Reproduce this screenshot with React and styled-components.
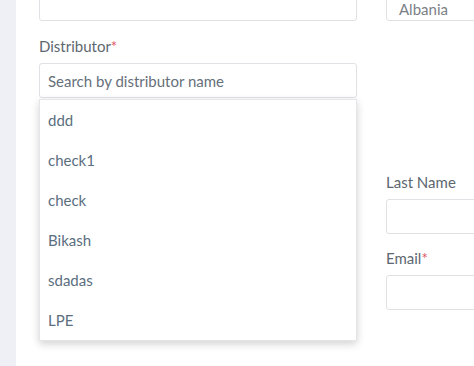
import styled, { createGlobalStyle } from "styled-components";

const Global = createGlobalStyle`
  html, body {
    margin: 0;
    padding: 0;
    background: #fff;
    overflow: hidden;
  }
  body {
    font-family: Lato, "Open Sans", sans-serif;
  }
`;

const Page = styled.div`
  display: flex;
  width: 474px;
  height: 366px;
  overflow: hidden;
`;

const Strip = styled.div`
  width: 16px;
  flex: none;
  background: #eff0f5;
`;

const Form = styled.div`
  display: grid;
  grid-template-columns: 318px 160px;
  column-gap: 29px;
  padding-left: 23px;
  margin-top: -14px;
  align-items: start;
`;

const Column = styled.div`
  display: flex;
  flex-direction: column;
`;

const Field = styled.div`
  display: flex;
  flex-direction: column;
  position: relative;
  margin-top: ${(p) => p.$top || 0}px;
`;

const Label = styled.label`
  font-size: 15px;
  line-height: 20px;
  color: #5d6770;
  margin-bottom: 7px;

  span {
    color: #e0555f;
  }
`;

const Input = styled.div`
  box-sizing: border-box;
  height: 35px;
  border: 1px solid #dfe1e5;
  border-radius: 3px;
  background: #fff;
  display: flex;
  align-items: center;
  font-size: 15px;
  color: ${(p) => (p.$muted ? "#7b8087" : "#66707a")};
  padding: ${(p) => (p.$muted ? "10px 0 0 12px" : "0 0 0 8px")};
`;

const Menu = styled.ul`
  position: absolute;
  top: 63px;
  left: 0;
  right: 0;
  margin: 0;
  padding: 0;
  list-style: none;
  background: #fff;
  border: 1px solid #e4e6ea;
  box-shadow: 0 3px 8px rgba(0, 0, 0, 0.18);
`;

const Item = styled.li`
  height: 40px;
  display: flex;
  align-items: center;
  padding-left: 8px;
  font-size: 15px;
  color: #5b6e80;
`;

const items = ["ddd", "check1", "check", "Bikash", "sdadas", "LPE"];

export default function App() {
  return (
    <>
      <Global />
      <Page>
        <Strip />
        <Form>
          <Column>
            <Input />
            <Field $top={15}>
              <Label>
                Distributor<span>*</span>
              </Label>
              <Input>Search by distributor name</Input>
              <Menu>
                {items.map((it) => (
                  <Item key={it}>{it}</Item>
                ))}
              </Menu>
            </Field>
          </Column>
          <Column>
            <Input $muted>Albania</Input>
            <Field $top={151}>
              <Label>Last Name</Label>
              <Input />
            </Field>
            <Field $top={14}>
              <Label>
                Email<span>*</span>
              </Label>
              <Input />
            </Field>
          </Column>
        </Form>
      </Page>
    </>
  );
}
